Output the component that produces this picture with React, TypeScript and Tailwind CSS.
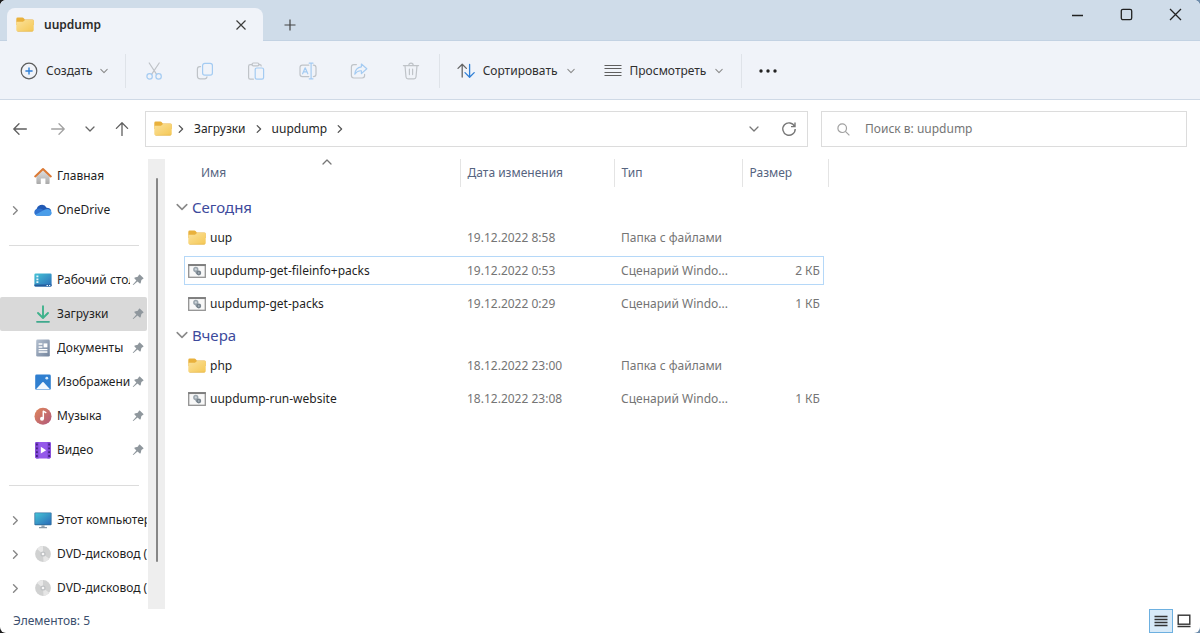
import type { ReactNode } from "react";

type IconProps = { className?: string };

function Chevron({ dir, className = "" }: { dir: "down" | "right" | "up"; className?: string }) {
  const d = { down: "M1 3 5 7 9 3", right: "M3.2 1.6 6.6 5 3.2 8.4", up: "M1 7 5 3 9 7" }[dir];
  return (
    <svg viewBox="0 0 10 10" fill="none" stroke="currentColor" strokeWidth="1.3" className={`shrink-0 ${className}`} aria-hidden="true">
      <path d={d} strokeLinecap="round" strokeLinejoin="round" />
    </svg>
  );
}

function FolderIcon({ className = "" }: IconProps) {
  return (
    <svg viewBox="0 0 18 16" className={`h-4 w-[18px] shrink-0 ${className}`} aria-hidden="true">
      <defs>
        <linearGradient id="folderFront" x1="0" y1="0" x2="1" y2="1">
          <stop offset="0" stopColor="#fbe19a" />
          <stop offset="1" stopColor="#f5c855" />
        </linearGradient>
      </defs>
      <path d="M0.3 2Q0.3 0.6 1.7 0.6H6.4Q7.2 0.6 7.8 1.3L8.8 2.4H16.3Q17.7 2.4 17.7 3.8V8H0.3Z" fill="#e9b13c" />
      <path d="M0.3 5.6Q0.3 4.8 1.2 4.8H7L9 3H16.5Q17.7 3 17.7 4.2V13Q17.7 14.4 16.3 14.4H1.7Q0.3 14.4 0.3 13Z" fill="url(#folderFront)" />
      <path d="M1 14Q1.4 14.4 2 14.4H16Q17 14.4 17.3 13.8Z" fill="#e3b650" />
    </svg>
  );
}

function ScriptIcon() {
  return (
    <svg viewBox="0 0 18 14" className="h-3.5 w-[18px] shrink-0" aria-hidden="true">
      <rect x="0.7" y="0.7" width="16.6" height="12.6" fill="#f8f8f8" stroke="#929292" strokeWidth="1.3" />
      <path d="M0.2 1.1H17.8" stroke="#7f7f7f" strokeWidth="1.9" />
      <circle cx="7.8" cy="5.4" r="1.9" fill="#cfd6dc" stroke="#9aa5ad" strokeWidth="1.5" />
      <path d="M7.8 7.6 9 10" stroke="#8f9aa3" strokeWidth="1.6" />
      <circle cx="10.8" cy="9" r="1.6" fill="#b9c3cb" stroke="#76828c" strokeWidth="1.6" />
    </svg>
  );
}

function SideSvg({ children }: { children: ReactNode }) {
  return (
    <svg viewBox="0 0 18 18" className="size-[18px] shrink-0" fill="none" aria-hidden="true">
      {children}
    </svg>
  );
}

const homeIcon = (
  <SideSvg>
    <defs>
      <linearGradient id="homeWall" x1="0" y1="0" x2="0" y2="1">
        <stop offset="0" stopColor="#e4e4e4" />
        <stop offset="1" stopColor="#a9a9a9" />
      </linearGradient>
    </defs>
    <path d="M2.4 8 9 2.4 15.6 8V16.2Q15.6 17 14.8 17H11.4V11.5H6.8V17H3.2Q2.4 17 2.4 16.2Z" fill="url(#homeWall)" />
    <path d="M1.2 9.4 9 2 16.8 9.4" stroke="#dc7a35" strokeWidth="2" strokeLinecap="round" strokeLinejoin="round" />
  </SideSvg>
);

const cloudIcon = (
  <SideSvg>
    <path d="M2.2 9.4Q3 5 6.4 4Q10.6 2.8 12.6 6.8Q16.4 6.8 17.3 10L12 13H4Z" fill="#2159b4" />
    <path d="M3.9 14.8Q0.4 14.5 0.3 11.2Q0.6 8.2 4 7.8Q6.4 7.2 8.4 8.4L17.4 12.4Q17 14.8 14.4 14.8Z" fill="#2f72cf" />
    <path d="M1.3 13.8 11 8.6Q12.6 7.6 14.8 8.2Q17.6 9 17.7 11.7Q17.5 14.6 14.4 14.8H3.9Q2.2 14.7 1.3 13.8Z" fill="#4a9de9" />
  </SideSvg>
);

const desktopIcon = (
  <SideSvg>
    <defs>
      <linearGradient id="desk" x1="0" y1="0" x2="1" y2="1">
        <stop offset="0" stopColor="#45c3d6" />
        <stop offset="1" stopColor="#2b6cb8" />
      </linearGradient>
    </defs>
    <rect x="0.4" y="2.5" width="17.2" height="13" rx="1.2" fill="url(#desk)" />
    <path d="M0.4 13.6H17.6V14.4Q17.6 15.5 16.5 15.5H1.5Q0.4 15.5 0.4 14.4Z" fill="#245b9b" />
    <path d="M2.4 4.5H4.4V6.3H2.4ZM2.4 7.4H4.4V9.2H2.4ZM2.4 10.3H4.4V12.1H2.4ZM12.5 14.1H14V15H12.5ZM15 14.1H16.3V15H15Z" fill="#e4f6fb" />
  </SideSvg>
);

const downloadIcon = (
  <SideSvg>
    <path d="M9 1.2V12.6M4 8 9 13 14 8" stroke="#3fb28c" strokeWidth="1.9" strokeLinecap="round" strokeLinejoin="round" />
    <path d="M3 16.8H15" stroke="#3fa98d" strokeWidth="1.8" strokeLinecap="round" />
  </SideSvg>
);

const documentIcon = (
  <SideSvg>
    <defs>
      <linearGradient id="docSheet" x1="0" y1="0" x2="1" y2="1">
        <stop offset="0" stopColor="#b4c0d0" />
        <stop offset="1" stopColor="#72839c" />
      </linearGradient>
    </defs>
    <rect x="2.2" y="0.6" width="13.6" height="17" rx="1.4" fill="url(#docSheet)" />
    <path d="M4.6 5H8.4M4.6 8H8.4M4.6 10.6H13.4M4.6 13H13.4" stroke="#fff" strokeWidth="1.3" />
    <rect x="9.6" y="4.4" width="3.8" height="4" fill="#fff" />
  </SideSvg>
);

const pictureIcon = (
  <SideSvg>
    <rect x="1.2" y="1.6" width="15.6" height="15.4" rx="1.4" fill="#2f7fd0" />
    <path d="M2 16.2 8.4 9.2Q9 8.6 9.6 9.2L16 16.2Q15.6 16.6 15.2 16.6H2.8Q2.4 16.6 2 16.2Z" fill="#f2f8fe" />
    <circle cx="12.8" cy="5.2" r="1.4" fill="#d6ebfc" />
  </SideSvg>
);

const musicIcon = (
  <SideSvg>
    <defs>
      <linearGradient id="music" x1="0" y1="0" x2="1" y2="1">
        <stop offset="0" stopColor="#e0875a" />
        <stop offset="1" stopColor="#b0587c" />
      </linearGradient>
    </defs>
    <circle cx="9" cy="9.2" r="8.5" fill="url(#music)" />
    <circle cx="8" cy="11.8" r="2" fill="#fff" />
    <path d="M9.3 12V4.2L12.3 5.8" stroke="#fff" strokeWidth="1.5" strokeLinejoin="round" />
  </SideSvg>
);

const videoIcon = (
  <SideSvg>
    <rect x="1.2" y="1" width="15.6" height="16.4" rx="1.4" fill="#9459ea" />
    <path d="M1.2 2.4Q1.2 1 2.6 1H4.6V17.4H2.6Q1.2 17.4 1.2 16ZM13.4 1H15.4Q16.8 1 16.8 2.4V16Q16.8 17.4 15.4 17.4H13.4Z" fill="#8148d6" />
    <path d="M2.9 2.6V17M15.1 2.6V17" stroke="#43207f" strokeWidth="1.7" strokeDasharray="1.9 1.9" />
    <path d="M6.8 5.8V12.6L12.2 9.2Z" fill="#fff" />
  </SideSvg>
);

const computerIcon = (
  <SideSvg>
    <rect x="0.4" y="1.4" width="17.2" height="12.8" rx="1" fill="#2f6f9f" />
    <rect x="1.2" y="2.2" width="15.6" height="11" fill="url(#desk)" />
    <path d="M7.4 14.2H10.6V16.2H7.4Z" fill="#93a5b2" />
    <path d="M5 16.7H13" stroke="#8b9aa6" strokeWidth="1.2" />
  </SideSvg>
);

const discIcon = (
  <SideSvg>
    <circle cx="9" cy="9" r="7.9" fill="#d0d1d1" />
    <path d="M9 9 3 4A7.9 7.9 0 0 1 9 1.1Z" fill="#e8e8e8" />
    <path d="M9 9 15.2 13.8A7.9 7.9 0 0 1 9.5 16.9Z" fill="#e6e6e6" />
    <circle cx="9" cy="9" r="2.6" fill="#bfc2c4" />
    <circle cx="9" cy="9" r="1.3" fill="#f7f7f7" />
  </SideSvg>
);

function Pin() {
  return (
    <svg viewBox="0 0 12 12" className="size-3 shrink-0 text-[#8f979d]" aria-hidden="true">
      <path d="M7.2 0.6Q7.6 0.3 8 0.7L11.4 4Q11.8 4.5 11.2 4.8L9.4 6.1L8.7 9Q8.2 9.9 7.5 9.3L5.5 7.5L1.4 11Q0.6 11.3 0.9 10.5L4.4 6.4L2.5 4.6Q2 3.9 2.8 3.5L5.8 2.7Z" fill="currentColor" />
    </svg>
  );
}

function ToolSvg({ children }: { children: ReactNode }) {
  return (
    <svg viewBox="0 0 18 18" className="size-[18px] shrink-0 stroke-[#bfc3c8]" fill="none" strokeWidth="1.2" strokeLinecap="round" strokeLinejoin="round" aria-hidden="true">
      {children}
    </svg>
  );
}

const tools: { label: string; icon: ReactNode }[] = [
  {
    label: "Вырезать",
    icon: (
      <ToolSvg>
        <path d="M4.2 1 11.6 12.4M14.2 1 6.6 12.4" />
        <g stroke="#a4cbf2">
          <circle cx="4.6" cy="14.4" r="2.7" />
          <circle cx="13.6" cy="14.4" r="2.7" />
        </g>
      </ToolSvg>
    ),
  },
  {
    label: "Копировать",
    icon: (
      <ToolSvg>
        <path d="M4.6 4.6H3.8Q1.4 4.6 1.4 7V14Q1.4 16.8 4.2 16.8H8.6Q10.9 16.8 11 14.8" />
        <rect x="6.6" y="1.4" width="9.8" height="11.8" rx="2.2" stroke="#a4cbf2" />
      </ToolSvg>
    ),
  },
  {
    label: "Вставить",
    icon: (
      <ToolSvg>
        <path d="M5 2.6H3.2Q1.6 2.6 1.6 4.2V15.6Q1.6 17.2 3.2 17.2H6.4M12 2.6H12.8Q14.2 2.6 14.2 4" />
        <rect x="5" y="1" width="7" height="2.8" rx="1.4" />
        <rect x="8.2" y="6" width="8.4" height="11.2" rx="1.6" stroke="#a4cbf2" />
      </ToolSvg>
    ),
  },
  {
    label: "Переименовать",
    icon: (
      <ToolSvg>
        <path d="M9.8 3.2H3.4Q1 3.2 1 5.6V12.2Q1 14.6 3.4 14.6H9.8M14.4 3.2Q17 3.2 17 5.6V12.2Q17 14.6 14.4 14.6" />
        <g stroke="#a4cbf2">
          <path d="M3.6 11.8 6.2 5.8 8.8 11.8M4.5 9.8H7.9" />
          <path d="M12.1 1.2V16.8M10.2 1.2H14M10.2 16.8H14" />
        </g>
      </ToolSvg>
    ),
  },
  {
    label: "Поделиться",
    icon: (
      <ToolSvg>
        <path d="M6.4 2.6H3.8Q1.4 2.6 1.4 5V13.6Q1.4 16 3.8 16H12.2Q14.6 16 14.6 13.6V12.4" />
        <path d="M11.4 2 16.8 6.8 11.4 11.6V8.8Q7.4 8.4 4.8 12.2Q5.2 5.6 11.4 4.8Z" stroke="#a4cbf2" />
      </ToolSvg>
    ),
  },
  {
    label: "Удалить",
    icon: (
      <ToolSvg>
        <path d="M1.4 3.6H16.6M6.8 3.4Q6.8 1.2 9 1.2Q11.2 1.2 11.2 3.4M3 3.8 4 15Q4.2 16.9 6 16.9H12Q13.8 16.9 14 15L15 3.8M7.4 7.2V12.6M10.6 7.2V12.6" />
      </ToolSvg>
    ),
  },
];

type SideItem = { label: string; icon: ReactNode; expandable?: boolean; pinned?: boolean; active?: boolean };

const sideGroups: SideItem[][] = [
  [
    { label: "Главная", icon: homeIcon },
    { label: "OneDrive", icon: cloudIcon, expandable: true },
  ],
  [
    { label: "Рабочий стол", icon: desktopIcon, pinned: true },
    { label: "Загрузки", icon: downloadIcon, pinned: true, active: true },
    { label: "Документы", icon: documentIcon, pinned: true },
    { label: "Изображения", icon: pictureIcon, pinned: true },
    { label: "Музыка", icon: musicIcon, pinned: true },
    { label: "Видео", icon: videoIcon, pinned: true },
  ],
  [
    { label: "Этот компьютер", icon: computerIcon, expandable: true },
    { label: "DVD-дисковод (D:)", icon: discIcon, expandable: true },
    { label: "DVD-дисковод (E:)", icon: discIcon, expandable: true },
  ],
];

type FileRow = { name: string; date: string; type: string; size?: string; focused?: boolean };

const SCRIPT = "Сценарий Windo...";
const FOLDER = "Папка с файлами";

const fileGroups: { title: string; rows: FileRow[] }[] = [
  {
    title: "Сегодня",
    rows: [
      { name: "uup", date: "19.12.2022 8:58", type: FOLDER },
      { name: "uupdump-get-fileinfo+packs", date: "19.12.2022 0:53", type: SCRIPT, size: "2 КБ", focused: true },
      { name: "uupdump-get-packs", date: "19.12.2022 0:29", type: SCRIPT, size: "1 КБ" },
    ],
  },
  {
    title: "Вчера",
    rows: [
      { name: "php", date: "18.12.2022 23:00", type: FOLDER },
      { name: "uupdump-run-website", date: "18.12.2022 23:08", type: SCRIPT, size: "1 КБ" },
    ],
  },
];

function TitleBar() {
  return (
    <header className="flex h-[41px] items-end border-b border-[#c3d2e3] bg-[#cfdce9] pl-[7px]">
      <div className="-mb-px flex h-[33px] w-64 items-center rounded-t-lg bg-[#f0f3f9] pr-4 pl-[9px]">
        <FolderIcon />
        <span className="ml-2.5 flex-1 font-semibold text-[#2b2b2b]">uupdump</span>
        <button aria-label="Закрыть вкладку" className="text-[#3c3c3c]">
          <svg viewBox="0 0 12 12" className="size-3" fill="none" stroke="currentColor" strokeWidth="1.2">
            <path d="M1.5 1.5 10.5 10.5M10.5 1.5 1.5 10.5" />
          </svg>
        </button>
      </div>
      <button aria-label="Новая вкладка" className="mb-[9px] ml-[21px] text-[#444]">
        <svg viewBox="0 0 12 12" className="size-3" fill="none" stroke="currentColor" strokeWidth="1.2">
          <path d="M6 0.5V11.5M0.5 6H11.5" />
        </svg>
      </button>
      <div className="mr-[18px] mb-[19px] ml-auto flex items-center gap-9 text-[#222]">
        <button aria-label="Свернуть">
          <svg viewBox="0 0 13 13" className="size-[13px]" fill="none" stroke="currentColor" strokeWidth="1.3">
            <path d="M1 7.5H12" />
          </svg>
        </button>
        <button aria-label="Развернуть">
          <svg viewBox="0 0 13 13" className="size-[13px]" fill="none" stroke="currentColor" strokeWidth="1.3">
            <rect x="1.3" y="1.3" width="10.4" height="10.4" rx="1.6" />
          </svg>
        </button>
        <button aria-label="Закрыть">
          <svg viewBox="0 0 13 13" className="size-[13px]" fill="none" stroke="currentColor" strokeWidth="1.3">
            <path d="M1 1 12 12M12 1 1 12" />
          </svg>
        </button>
      </div>
    </header>
  );
}

function Divider() {
  return <div className="h-[34px] w-px bg-[#dfe3e9]" />;
}

function Toolbar() {
  return (
    <div className="flex h-[59px] items-center border-b border-[#cfd9e6] bg-[#f0f3f9] pt-0.5 pl-5 text-[#2f2f2f]">
      <button className="flex items-center">
        <svg viewBox="0 0 18 18" className="size-[18px]" fill="none" strokeWidth="1.2" aria-hidden="true">
          <circle cx="9" cy="9" r="7.8" stroke="#5d5d5d" />
          <path d="M9 5.4V12.6M5.4 9H12.6" stroke="#2f7fd6" strokeWidth="1.4" />
        </svg>
        <span className="ml-2">Создать</span>
        <Chevron dir="down" className="ml-[7px] size-2 text-[#8a8a8a]" />
      </button>
      <div className="ml-[17px]">
        <Divider />
      </div>
      <div className="ml-[19px] flex w-[275px] justify-between">
        {tools.map((t) => (
          <button key={t.label} aria-label={t.label}>
            {t.icon}
          </button>
        ))}
      </div>
      <div className="ml-[19px]">
        <Divider />
      </div>
      <button className="ml-[17px] flex items-center">
        <svg viewBox="0 0 18 18" className="size-[18px]" fill="none" strokeWidth="1.3" strokeLinecap="round" strokeLinejoin="round" aria-hidden="true">
          <path d="M5.2 15V2.4M1 6.4 5.2 2.2 9.4 6.4" stroke="#666" />
          <path d="M12.6 2.4V15M8 10.6 12.6 15.2 17.2 10.6" stroke="#2f7fd6" />
        </svg>
        <span className="ml-2">Сортировать</span>
        <Chevron dir="down" className="ml-[9px] size-2 text-[#8a8a8a]" />
      </button>
      <button className="ml-[29px] flex items-center">
        <svg viewBox="0 0 18 18" className="size-[18px]" stroke="#5f5f5f" strokeWidth="1.1" aria-hidden="true">
          <path d="M0.5 3.5H17.5M0.5 6.5H17.5M0.5 10.5H17.5M0.5 13.5H17.5" />
        </svg>
        <span className="ml-2">Просмотреть</span>
        <Chevron dir="down" className="ml-[9px] size-2 text-[#8a8a8a]" />
      </button>
      <div className="ml-[18px]">
        <Divider />
      </div>
      <button aria-label="Подробнее" className="ml-[17px]">
        <svg viewBox="0 0 18 6" className="h-1.5 w-[18px] fill-[#222]">
          <circle cx="2" cy="3" r="1.7" />
          <circle cx="9" cy="3" r="1.7" />
          <circle cx="16" cy="3" r="1.7" />
        </svg>
      </button>
    </div>
  );
}

function Arrow({ d, label, className }: { d: string; label: string; className: string }) {
  return (
    <button aria-label={label} className={className}>
      <svg viewBox="0 0 14 14" className="size-3.5" fill="none" stroke="currentColor" strokeWidth="1.3" strokeLinecap="round" strokeLinejoin="round">
        <path d={d} />
      </svg>
    </button>
  );
}

function NavigationRow() {
  return (
    <div className="flex items-center gap-[13px] pt-[11px] pr-[13px] pb-3 pl-[13px]">
      <nav aria-label="Навигация" className="flex w-[119px] items-center">
        <Arrow label="Назад" className="text-[#5f5f5f]" d="M13.4 7H0.9M6 1.8 0.8 7 6 12.2" />
        <Arrow label="Вперед" className="ml-6 text-[#a2a2a2]" d="M0.6 7H13.1M8 1.8 13.2 7 8 12.2" />
        <button aria-label="Последние расположения" className="ml-5 text-[#666]">
          <Chevron dir="down" className="size-2.5" />
        </button>
        <Arrow label="Вверх" className="ml-5 text-[#5f5f5f]" d="M7 13.4V0.9M1.4 6.4 7 0.8 12.6 6.4" />
      </nav>
      <div className="flex h-9 flex-1 items-center border border-[#dcdcdc] pr-2.5 pl-2">
        <FolderIcon />
        <Chevron dir="right" className="ml-1 size-2.5 text-[#555]" />
        <a href="#downloads" className="ml-2 text-[#262626]">Загрузки</a>
        <Chevron dir="right" className="ml-2 size-2.5 text-[#555]" />
        <a href="#uupdump" className="ml-2 text-[#262626]">uupdump</a>
        <Chevron dir="right" className="ml-2 size-2.5 text-[#555]" />
        <button aria-label="Предыдущие расположения" className="ml-auto text-[#777]">
          <Chevron dir="down" className="size-2.5" />
        </button>
        <button aria-label="Обновить" className="ml-[22px] text-[#777]">
          <svg viewBox="0 0 16 16" className="size-4" fill="none" stroke="currentColor" strokeWidth="1.4">
            <path d="M13.6 5.4A6.2 6.2 0 1 0 14.2 8M14 1.6V5.6H10" />
          </svg>
        </button>
      </div>
      <label className="flex h-9 w-[366px] items-center border border-[#dcdcdc] pl-[15px]">
        <svg viewBox="0 0 13 13" className="size-[13px] shrink-0 text-[#a0a0a0]" fill="none" stroke="currentColor" strokeWidth="1.2" aria-hidden="true">
          <circle cx="5.2" cy="5.2" r="4.3" />
          <path d="M8.4 8.4 12.4 12.4" />
        </svg>
        <input
          type="search"
          aria-label="Поиск"
          placeholder="Поиск в: uupdump"
          className="ml-[15px] min-w-0 flex-1 outline-none placeholder:text-[#757575]"
        />
      </label>
    </div>
  );
}

function SideLink({ item }: { item: SideItem }) {
  return (
    <li className={item.active ? "rounded-xs bg-[#d9d9d9]" : ""}>
      <a href="#" className="flex h-[34px] items-center pl-2.5 text-[#1f1f1f]">
        <span className="w-6 shrink-0">
          {item.expandable && <Chevron dir="right" className="size-[11px] text-[#8a8a8a]" />}
        </span>
        {item.icon}
        <span className="ml-[5px] min-w-0 flex-1 overflow-hidden whitespace-nowrap">{item.label}</span>
        {item.pinned && (
          <span className="mr-[3px] ml-0.5">
            <Pin />
          </span>
        )}
      </a>
    </li>
  );
}

function Sidebar() {
  return (
    <aside className="flex w-[165px] shrink-0">
      <div className="min-w-0 flex-1 pr-px">
        {sideGroups.map((group, i) => (
          <div key={i}>
            {i > 0 && (
              <div className="flex h-9 items-center pr-2 pl-[9px]">
                <hr className="w-full border-[#dcdcdc]" />
              </div>
            )}
            <ul>
              {group.map((item) => (
                <SideLink key={item.label} item={item} />
              ))}
            </ul>
          </div>
        ))}
      </div>
      <div className="flex w-[17px] justify-center bg-[#eeeeee] pt-[19px] pb-[47px]">
        <div className="w-0.5 rounded-full bg-[#868686]" />
      </div>
    </aside>
  );
}

function FileTable() {
  return (
    <table className="w-[663px] table-fixed border-collapse text-left">
      <colgroup>
        <col className="w-[295px]" />
        <col className="w-[154px]" />
        <col className="w-[128px]" />
        <col className="w-[86px]" />
      </colgroup>
      <thead>
        <tr className="h-7 text-[#56647f]">
          <th className="relative border-r border-[#e4e4e4] p-0 pl-9 font-normal">
            Имя
            <Chevron dir="up" className="absolute -top-0.5 left-[157px] size-2.5 text-[#777]" />
          </th>
          <th className="border-r border-[#e4e4e4] p-0 pl-[7px] font-normal">Дата изменения</th>
          <th className="border-r border-[#e4e4e4] p-0 pl-[7px] font-normal">Тип</th>
          <th className="border-r border-[#e4e4e4] p-0 pl-[7px] font-normal">Размер</th>
        </tr>
      </thead>
      {fileGroups.map((group, i) => (
        <tbody key={group.title}>
          <tr>
            <th colSpan={4} className={`p-0 font-normal ${i === 0 ? "pt-[5px]" : ""}`}>
              <button className="flex h-[29px] items-center pl-[11px] text-[15px] text-[#3d4a9c]">
                <Chevron dir="down" className="mr-1 size-3 text-[#8a8a8a]" />
                {group.title}
              </button>
            </th>
          </tr>
          {group.rows.map((row) => {
            const line = row.focused ? "border-[#b5d8f8]" : "border-transparent";
            return (
              <tr key={row.name} className="text-[#757575]">
                <td className="p-0 py-0.5">
                  <div className={`ml-[19px] flex h-[29px] items-center border-y border-l pl-[3px] text-[#1f1f1f] ${line}`}>
                    {row.type === FOLDER ? <FolderIcon /> : <ScriptIcon />}
                    <span className="ml-1 whitespace-nowrap">{row.name}</span>
                  </div>
                </td>
                <td className="p-0 py-0.5">
                  <div className={`flex h-[29px] items-center border-y pl-[7px] whitespace-nowrap ${line}`}>{row.date}</div>
                </td>
                <td className="p-0 py-0.5">
                  <div className={`flex h-[29px] items-center border-y pl-[7px] whitespace-nowrap ${line}`}>{row.type}</div>
                </td>
                <td className="p-0 py-0.5">
                  <div className={`mr-1 flex h-[29px] items-center justify-end border-y border-r pr-[3px] whitespace-nowrap ${line}`}>{row.size}</div>
                </td>
              </tr>
            );
          })}
        </tbody>
      ))}
    </table>
  );
}

function StatusBar() {
  return (
    <footer className="flex h-6 items-center justify-between pl-[13px] text-[#3c4f6e]">
      <span>Элементов: 5</span>
      <div className="flex items-center gap-1 pr-[9px]">
        <button aria-label="Таблица" className="flex size-6 items-center justify-center border border-[#6db0e0] bg-[#d8eaf8]">
          <svg viewBox="0 0 14 14" className="size-3.5" stroke="#333" strokeWidth="1.4">
            <path d="M0.5 2.5H13.5M0.5 5.5H13.5M0.5 8.5H13.5M0.5 11.5H13.5" />
          </svg>
        </button>
        <button aria-label="Крупные значки">
          <svg viewBox="0 0 14 14" className="size-3.5" fill="none" stroke="#333" strokeWidth="1.4">
            <rect x="1.2" y="1.2" width="11.6" height="9" />
            <path d="M0.5 12.5H13.5" />
          </svg>
        </button>
      </div>
    </footer>
  );
}

export default function App() {
  return (
    <div className="min-h-screen bg-linear-to-r from-[#1c1c1c] to-[#6d8cab]">
      <div className="flex min-h-screen flex-col overflow-hidden rounded-md bg-white font-['Noto_Sans','Open_Sans',sans-serif] text-xs">
        <TitleBar />
        <Toolbar />
        <NavigationRow />
        <div className="flex flex-1">
          <Sidebar />
          <main className="min-w-0 flex-1">
            <FileTable />
          </main>
        </div>
        <StatusBar />
      </div>
    </div>
  );
}
